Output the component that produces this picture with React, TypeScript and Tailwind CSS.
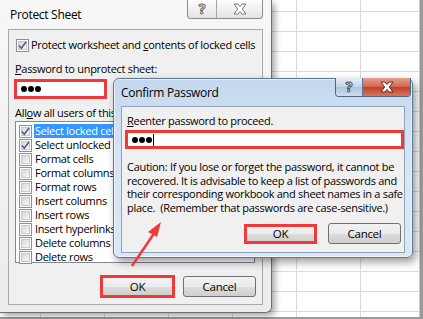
import React from "react";

function CheckBox({ checked }: { checked?: boolean }) {
  return (
    <span className="relative flex h-[13px] w-[13px] shrink-0 items-center justify-center border border-[#8e8f8f] bg-white">
      <span className="absolute inset-[1px] border border-[#c9c9c9] bg-[linear-gradient(135deg,#d8d8d8,#f7f7f7)]" />
      {checked && (
        <svg viewBox="0 0 11 11" className="relative h-[11px] w-[11px]">
          <path d="M2 5.5 L4.3 8.3 L9 2" fill="none" stroke="#4a5f8f" strokeWidth="1.6" />
        </svg>
      )}
    </span>
  );
}

function Dots() {
  return (
    <span className="flex items-center gap-[1px] pl-[4px]">
      <span className="h-[6px] w-[6px] rounded-full bg-black" />
      <span className="h-[6px] w-[6px] rounded-full bg-black" />
      <span className="h-[6px] w-[6px] rounded-full bg-black" />
    </span>
  );
}

const btnFace = "bg-[linear-gradient(#f2f2f2_0%,#ebebeb_50%,#dddddd_51%,#cfcfcf_100%)]";

function WinButton({ label }: { label: string }) {
  return (
    <div
      className={
        "flex h-[21px] w-[73px] items-center justify-center rounded-[3px] border border-[#707070] text-[11.5px] text-black " +
        btnFace
      }
    >
      {label}
    </div>
  );
}

// default button with the red highlight box drawn over its edge
function RedOkButton({ size }: { size: string }) {
  return (
    <div className={"flex items-center justify-center border-[3px] border-[#f03a3a] text-[11.5px] text-black " + size + " " + btnFace}>
      OK
    </div>
  );
}

function XGlyph({ fill, stroke }: { fill: string; stroke: string }) {
  return (
    <svg viewBox="0 0 16 12" className="h-[12px] w-[16px]">
      <path
        d="M2 1 H6 L8 3.5 L10 1 H14 L10.3 6 L14 11 H10 L8 8.5 L6 11 H2 L5.7 6 Z"
        fill={fill}
        stroke={stroke}
        strokeWidth="1"
        strokeLinejoin="round"
      />
    </svg>
  );
}

const items = [
  { label: "Select locked cells", checked: true, selected: true },
  { label: "Select unlocked cells", checked: true },
  { label: "Format cells" },
  { label: "Format columns" },
  { label: "Format rows" },
  { label: "Insert columns" },
  { label: "Insert rows" },
  { label: "Insert hyperlinks" },
  { label: "Delete columns" },
  { label: "Delete rows" },
];

export default function App() {
  return (
    <div className="relative h-[319px] w-[423px] overflow-hidden bg-[#9a9a9a] font-['Open_Sans','Noto_Sans',sans-serif] text-[11px] leading-[14px] tracking-[-0.3px] text-black">
      {/* spreadsheet behind */}
      <div className="h-[317px] w-[419px] bg-white bg-[linear-gradient(to_right,#dadada_1px,transparent_1px),linear-gradient(to_bottom,#dadada_1px,transparent_1px)] bg-[length:64px_20px] bg-[position:40px_11px] shadow-[1px_0_0_#c8c8c8]" />

      {/* Protect Sheet */}
      <div className="absolute left-0 top-0 flex h-[313px] w-[272px] flex-col rounded-br-[6px] border-b border-r border-[#6f6f6f] bg-[linear-gradient(#f7f7f7,#ececec)] shadow-[3px_3px_6px_rgba(0,0,0,0.35)]">
        <div className="flex h-[29px] shrink-0 items-center pl-[10px] text-[12px]">Protect Sheet</div>

        <div className="absolute right-[8px] top-0 flex h-[19px] overflow-hidden rounded-b-[4px] border border-t-0 border-[#8d8d8d] bg-[linear-gradient(#fdfdfd,#e4e4e4)]">
          <div className="flex w-[29px] items-center justify-center border-r border-[#a5a5a5] text-[14px] font-bold leading-none text-white [-webkit-text-stroke:1px_#6a6a6a]">
            ?
          </div>
          <div className="flex w-[45px] items-center justify-center">
            <XGlyph fill="#ffffff" stroke="#7a7a7a" />
          </div>
        </div>

        <div className="mx-[8px] mb-[7px] flex flex-1 flex-col overflow-hidden border border-[#a9a9a9] bg-[#f0f0f0]">
          <div className="flex items-center gap-[2px] pl-[7px] pt-[8px]">
            <CheckBox checked />
            <span className="whitespace-nowrap">
              Protect worksheet and <u>c</u>ontents of locked cells
            </span>
          </div>

          <div className="mt-[10px] pl-[6px]">
            <u>P</u>assword to unprotect sheet:
          </div>
          <div className="ml-[5px] mt-[3px] flex h-[20px] w-[93px] items-center border-[3px] border-[#f03a3a] bg-white">
            <Dots />
          </div>

          <div className="mt-[7px] whitespace-nowrap pl-[6px]">
            All<u>o</u>w all users of this worksheet to:
          </div>
          <div className="ml-[6px] mt-[1px] h-[142px] w-[240px] shrink-0 border border-[#828790] bg-white pl-[3px] pt-[2px]">
            {items.map((it) => (
              <div key={it.label} className="flex h-[14px] items-center gap-[2px]">
                <CheckBox checked={it.checked} />
                <span
                  className={
                    "whitespace-nowrap px-[1px] " + (it.selected ? "bg-[#3399ff] text-white" : "")
                  }
                >
                  {it.label}
                </span>
              </div>
            ))}
          </div>

          <div className="mt-auto flex items-center justify-end gap-[8px] pb-[6px] pr-[6px]">
            <RedOkButton size="h-[23px] w-[75px]" />
            <WinButton label="Cancel" />
          </div>
        </div>
      </div>

      {/* Confirm Password */}
      <div className="absolute left-[113px] top-[78px] flex h-[180px] w-[300px] flex-col rounded-[6px] border border-[#5d7896] bg-[linear-gradient(#c3d8ee,#d5e4f4_40%,#dbe7f5)] shadow-[3px_4px_8px_rgba(0,0,0,0.4),inset_0_0_0_1px_rgba(255,255,255,0.6)]">
        <div className="flex h-[27px] shrink-0 items-center pl-[7px] text-[12px]">Confirm Password</div>

        <div className="absolute right-[1px] top-[-1px] flex h-[19px] overflow-hidden rounded-b-[4px] border border-t-0 border-[#4f6782]">
          <div className="flex w-[27px] items-center justify-center border-r border-[#5d7896] bg-[linear-gradient(#e6eef7,#c2d4e8_50%,#aec4dd_51%,#cfdcec)] text-[14px] font-bold leading-none text-white [-webkit-text-stroke:1px_#3d4f66]">
            ?
          </div>
          <div className="flex w-[47px] items-center justify-center bg-[linear-gradient(#e8a091,#d2624d_50%,#c0412a_51%,#d7735a)]">
            <XGlyph fill="#ffffff" stroke="#5a2a22" />
          </div>
        </div>

        <div className="mx-[7px] mb-[4px] flex flex-1 flex-col overflow-hidden border border-[#8fa3bb] bg-[#f0f0f0]">
          <div className="pl-[5px] pt-[7px]">
            <u>R</u>eenter password to proceed.
          </div>
          <div className="ml-[3px] mt-[2px] flex h-[19px] w-[279px] items-center border-[3px] border-[#f03a3a] bg-white">
            <Dots />
            <span className="ml-[1px] h-[12px] w-[1px] bg-black" />
          </div>

          <div className="mt-[11px] whitespace-nowrap pl-[5px] leading-[13.5px]">
            Caution: If you lose or forget the password, it cannot be
            <br />
            recovered. It is advisable to keep a list of passwords and
            <br />
            their corresponding workbook and sheet names in a safe
            <br />
            place.&nbsp; (Remember that passwords are case-sensitive.)
          </div>

          <div className="mt-auto flex items-center justify-end gap-[11px] pb-[8px] pr-[3px]">
            <RedOkButton size="h-[20px] w-[73px]" />
            <WinButton label="Cancel" />
          </div>
        </div>
      </div>

      {/* pointer arrow */}
      <svg className="pointer-events-none absolute left-0 top-0 h-[319px] w-[423px]" viewBox="0 0 423 319">
        <line x1="132" y1="266" x2="155" y2="232" stroke="#f03a3a" strokeWidth="2.5" />
        <polygon points="161,222 148,232 157,237" fill="#f03a3a" />
      </svg>
    </div>
  );
}
